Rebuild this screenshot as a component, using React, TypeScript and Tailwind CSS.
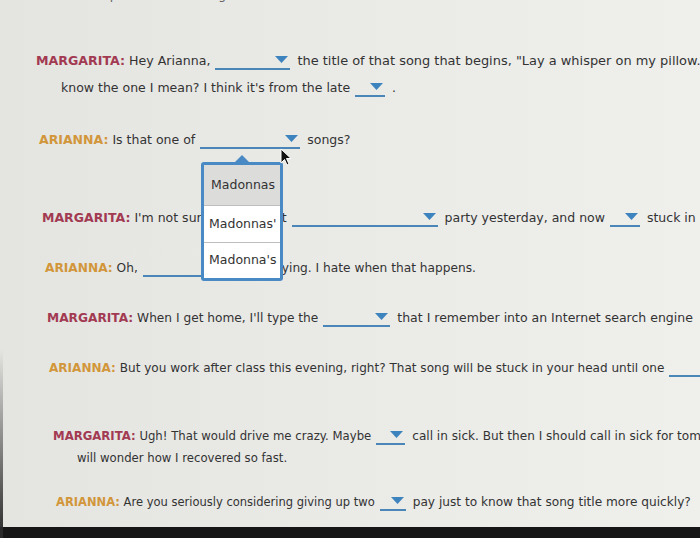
import React from "react";

const Drop = ({ w, tri = true }: { w: number; tri?: boolean }) => (
  <span
    className="inline-flex items-start justify-end h-[19px] border-b-2 border-[#4a86b8] align-top pt-[5px] ml-[5px] mr-[7px]"
    style={{ width: w }}
  >
    {tri && (
      <svg width="13" height="7" viewBox="0 0 13 7" className="mr-[2px]">
        <path d="M0 0 L13 0 L6.5 7 Z" fill="#3d84bf" />
      </svg>
    )}
  </span>
);

const M = () => <span className="font-bold text-[#a23a52]">MARGARITA:</span>;
const A = () => <span className="font-bold text-[#d2963a]">ARIANNA:</span>;

export default function App() {
  return (
    <div
      className="relative w-[700px] h-[538px] overflow-hidden flex flex-col bg-gradient-to-r from-[#e4e4e1] via-[#eaeae7] to-[#efefec] text-[#333]"
      style={{ fontFamily: '"DejaVu Sans", Verdana, sans-serif' }}
    >
      <div className="flex-1 flex flex-col whitespace-nowrap leading-[20px]">
        <div className="h-[20px] mt-[-15px] pl-[10px] text-[12.5px] text-[#666]">Directions: Complete the following conversation with the correct words.</div>
        <div className="h-[20px] mt-[46px] pl-[36px] text-[12.6px]">
          <M /> Hey Arianna,<Drop w={75} />
          <span className="text-[12.95px]">the title of that song that begins, "Lay a whisper on my pillow."</span>
        </div>
        <div className="h-[20px] mt-[7px] pl-[61px] text-[12.5px]">
          know the one I mean? I think it's from the late<Drop w={30} />.
        </div>
        <div className="h-[20px] mt-[32px] pl-[39px] text-[12.5px]">
          <A /> Is that one of<Drop w={100} />songs?
        </div>
        <div className="h-[20px] mt-[58px] pl-[42px] text-[12.5px]">
          <M /> I'm not sur<span className="inline-block w-[80px] overflow-hidden align-top">e. I heard it a</span>t<Drop w={146} />party yesterday, and now<Drop w={30} />stuck in
        </div>
        <div className="h-[20px] mt-[30px] pl-[45px] text-[12.2px]">
          <A /> Oh,<Drop w={132} tri={false} />ying. I hate when that happens.
        </div>
        <div className="h-[20px] mt-[30px] pl-[47px] text-[12.2px]">
          <M /> When I get home, I'll type the<Drop w={67} />
          <span className="text-[12.5px]">that I remember into an Internet search engine</span>
        </div>
        <div className="h-[20px] mt-[30px] pl-[49px] text-[12.05px]">
          <A /> But you work after class this evening, right? That song will be stuck in your head until one<Drop w={40} tri={false} />
        </div>
        <div className="h-[20px] mt-[48px] pl-[53px] text-[11.7px]">
          <M /> Ugh! That would drive me crazy. Maybe<Drop w={29} />
          <span className="text-[12.1px]">call in sick. But then I should call in sick for tomorrow</span>
        </div>
        <div className="h-[20px] mt-[2px] pl-[77px] text-[11.7px]">will wonder how I recovered so fast.</div>
        <div className="h-[20px] mt-[24px] pl-[56px] text-[11.5px]">
          <A /> Are you seriously considering giving up two<Drop w={26} />
          <span className="text-[12.15px]">pay just to know that song title more quickly?</span>
        </div>
      </div>
      <div className="h-[11px] bg-[#161616]" />
      <div className="absolute left-0 top-[350px] bottom-0 w-[3px] bg-gradient-to-b from-transparent to-[#2a2a2a]" />

      {/* dropdown popup */}
      <div className="absolute left-[201px] top-[155px] w-[82px] flex flex-col items-center text-[12.5px]">
        <svg width="14" height="7" viewBox="0 0 14 7" className="block">
          <path d="M0 7 L7 0 L14 7 Z" fill="#4a8ac4" />
        </svg>
        <div className="w-full border-[3px] border-[#4a8ac4] rounded-[3px] bg-white flex flex-col">
          <div className="h-[41px] flex items-center pl-[7px] bg-[#dcdcdb] border-b border-[#bdbdbd]">Madonnas</div>
          <div className="h-[37px] flex items-center pl-[5px] border-b border-[#bdbdbd]">Madonnas'</div>
          <div className="h-[35px] flex items-center pl-[5px]">Madonna's</div>
        </div>
      </div>

      {/* cursor */}
      <svg className="absolute left-[280px] top-[148px]" width="12" height="18" viewBox="0 0 12 18">
        <path d="M1 1 L1 15 L4.5 11.5 L7 17 L9 16 L6.5 10.5 L11 10.5 Z" fill="#111" stroke="#fff" strokeWidth="1" />
      </svg>
    </div>
  );
}
